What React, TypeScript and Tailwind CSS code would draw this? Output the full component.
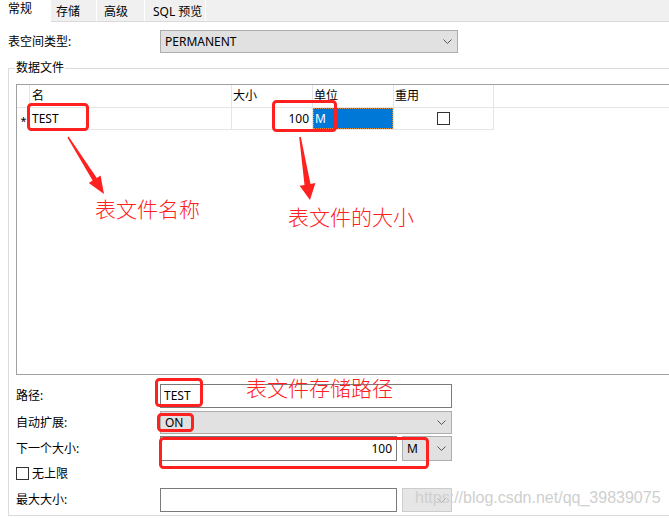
import React from "react";

function Chevron({ light = false }: { light?: boolean }) {
  return (
    <svg width="9" height="5" viewBox="0 0 9 5" className="shrink-0">
      <polyline
        points="0.5,0.5 4.5,4.5 8.5,0.5"
        fill="none"
        stroke={light ? "#a0a0a0" : "#555555"}
        strokeWidth="1"
      />
    </svg>
  );
}

function Select({
  text,
  w,
  h,
  disabled = false,
}: {
  text: string;
  w: string;
  h: string;
  disabled?: boolean;
}) {
  return (
    <div
      className={`${w} ${h} flex items-center justify-between pl-[4px] pr-[5px] border ${
        disabled ? "bg-[#e6e6e6] border-[#cccccc]" : "bg-[#e1e1e1] border-[#adadad]"
      }`}
    >
      <span>{text}</span>
      <Chevron light={disabled} />
    </div>
  );
}

export default function App() {
  return (
    <div className="relative w-[669px] h-[518px] overflow-hidden bg-white text-[12px] leading-[16px] text-black font-['Noto_Sans','Noto_Sans_CJK_SC',sans-serif]">
      {/* Tab bar */}
      <div className="flex h-[22px] bg-[#f0f0f0] border-b border-[#dadada]">
        <div className="w-[51px] h-[22px] bg-white pl-[8px] pt-[1px]">常规</div>
        <div className="w-[46px] h-[21px] border-r border-white pl-[5px] pt-[4px]">存储</div>
        <div className="w-[48px] h-[21px] border-r border-white pl-[7px] pt-[4px]">高级</div>
        <div className="w-[61px] h-[21px] border-r border-white pl-[8px] pt-[4px]">SQL 预览</div>
      </div>

      {/* Tablespace type */}
      <div className="flex items-center mt-[8px] h-[23px]">
        <div className="w-[160px] pl-[8px]">表空间类型:</div>
        <Select text="PERMANENT" w="w-[298px]" h="h-[23px]" />
      </div>

      {/* Group box */}
      <div className="mt-[15px] ml-[8px] w-[700px] h-[448px] border border-r-0 border-[#dcdcdc]">
        <div className="ml-[6px] -mt-[9px] w-fit bg-white px-[1px]">数据文件</div>

        {/* Grid */}
        <div className="mt-[8px] ml-[7px] w-[690px] h-[291px] border border-[#a0a0a0]">
          <div className="flex h-[23px] border-b border-[#e5e5e5]">
            <div className="w-[13px] border-r border-[#e5e5e5]" />
            <div className="w-[202px] border-r border-[#e5e5e5] pl-[2px] flex items-center">名</div>
            <div className="w-[81px] border-r border-[#e5e5e5] pl-[1px] flex items-center">大小</div>
            <div className="w-[81px] border-r border-[#e5e5e5] pl-[1px] flex items-center">单位</div>
            <div className="w-[100px] border-r border-[#e5e5e5] pl-[1px] flex items-center">重用</div>
          </div>
          <div className="flex h-[22px]">
            <div className="w-[13px] flex items-center justify-center text-[11px] pt-[3px]">*</div>
            <div className="w-[202px] border-r border-b border-[#e5e5e5] pl-[2px] flex items-center">TEST</div>
            <div className="w-[81px] border-r border-b border-[#e5e5e5] pr-[3px] flex items-center justify-end">100</div>
            <div className="w-[81px] border-r border-b border-[#e5e5e5] flex">
              <div className="flex-1 bg-[#0078d7] border border-dotted border-[#d89040] text-white pl-[1px] flex items-center">M</div>
            </div>
            <div className="w-[100px] border-r border-b border-[#e5e5e5] flex items-center justify-center">
              <div className="w-[13px] h-[13px] border border-[#333333] bg-white" />
            </div>
          </div>
        </div>

        {/* Form */}
        <div className="pl-[7px] flex flex-col">
          <div className="flex items-center mt-[9px] h-[24px]">
            <div className="w-[144px]">路径:</div>
            <div className="w-[292px] h-[24px] border border-[#7a7a7a] pl-[3px] flex items-center">TEST</div>
          </div>
          <div className="flex items-center mt-[3px] h-[23px]">
            <div className="w-[144px]">自动扩展:</div>
            <Select text="ON" w="w-[292px]" h="h-[23px]" />
          </div>
          <div className="flex items-center mt-[2px] h-[25px]">
            <div className="w-[144px]">下一个大小:</div>
            <div className="w-[237px] h-[25px] border border-[#7a7a7a] pr-[4px] flex items-center justify-end">100</div>
            <div className="ml-[5px]">
              <Select text="M" w="w-[50px]" h="h-[25px]" />
            </div>
          </div>
          <div className="flex items-center mt-[6px] h-[13px]">
            <div className="w-[13px] h-[13px] border border-[#333333]" />
            <div className="ml-[3px]">无上限</div>
          </div>
          <div className="flex items-center mt-[8px] h-[24px]">
            <div className="w-[144px]">最大大小:</div>
            <div className="w-[237px] h-[24px] border border-[#7a7a7a]" />
            <div className="ml-[5px]">
              <Select text="" w="w-[50px]" h="h-[24px]" disabled />
            </div>
          </div>
        </div>
      </div>

      {/* Annotations overlay */}
      <svg className="absolute left-0 top-0 pointer-events-none" width="669" height="518" viewBox="0 0 669 518">
        <g fill="none" stroke="#ff2020" strokeWidth="3">
          <rect x="28.5" y="104.5" width="59" height="25" rx="3" />
          <rect x="273.5" y="101.5" width="62" height="29" rx="3" />
          <rect x="156.5" y="379.5" width="45" height="26" rx="3" />
          <rect x="158.5" y="414.5" width="34" height="16" rx="3" />
          <rect x="160.5" y="438.5" width="267" height="29" rx="3" />
        </g>
        <polygon
          fill="#ff2020"
          points="68.6,136.6 96.8,178.0 100.6,175.6 104,194 88.8,183.0 92.6,180.6 67.4,137.4"
        />
        <polygon
          fill="#ff2020"
          points="300.8,136.9 310.5,183.9 315.4,183.1 310,200 299.6,185.7 304.5,184.9 299.2,137.1"
        />
      </svg>
      <div className="absolute left-[95px] top-[198px] text-[21px] leading-none text-[#ff2020] font-light font-['Noto_Sans_CJK_SC',sans-serif]">
        表文件名称
      </div>
      <div className="absolute left-[288px] top-[206px] text-[21px] leading-none text-[#ff2020] font-light font-['Noto_Sans_CJK_SC',sans-serif]">
        表文件的大小
      </div>
      <div className="absolute left-[246px] top-[377px] text-[21px] leading-none text-[#ff2020] font-light font-['Noto_Sans_CJK_SC',sans-serif]">
        表文件存储路径
      </div>
      <div className="absolute left-[415px] top-[490px] text-[16px] leading-none text-[#cfcfcf] font-['Liberation_Sans',sans-serif]">
        https://blog.csdn.net/qq_39839075
      </div>
    </div>
  );
}
